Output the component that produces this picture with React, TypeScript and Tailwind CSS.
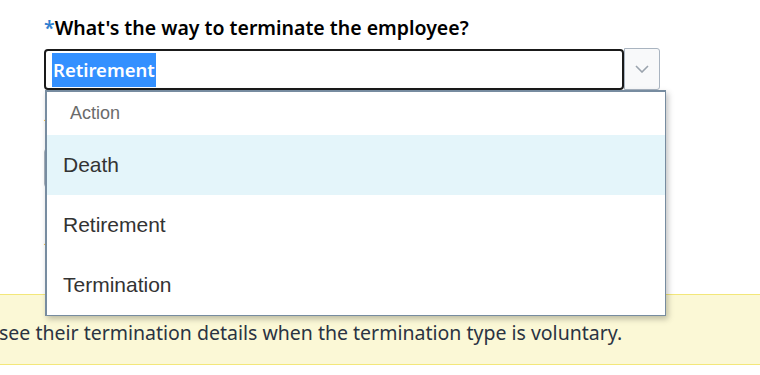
import React from "react";

export default function App() {
  return (
    <div className="relative w-[760px] h-[375px] overflow-hidden bg-white" style={{ fontFamily: "'Noto Sans', 'Open Sans', sans-serif" }}>
      <div className="pt-[13px] pl-[44px]">
        <div className="text-[19.5px] leading-[29px] font-semibold text-black">
          <span className="text-[#2f7fd0]">*</span>What's the way to terminate the employee?
        </div>
        <div className="mt-[7px] flex items-start">
          <div className="w-[580px] h-[41px] border-2 border-[#1a1a1a] rounded-[4px] flex items-center pl-[6px]">
            <span className="bg-[#3390ff] text-white font-semibold text-[18.5px] leading-[34px] px-[1px]">Retirement</span>
          </div>
          <div className="w-[36px] h-[42px] -mt-[1px] bg-[#f8f9fa] border border-[#a9b4c0] rounded-tr-[3px] rounded-br-[3px] flex items-center justify-center">
            <svg width="14" height="8" viewBox="0 0 14 8" fill="none">
              <path d="M1 1l6 6 6-6" stroke="#9aa3ad" strokeWidth="1.6" />
            </svg>
          </div>
        </div>
        <div className="mt-[28px] text-[#e07b2b] text-[12px] leading-[12px]">*</div>
        <div className="mt-[18px] w-[200px] h-[40px] border border-[#aab4be] rounded-[4px]"></div>
        <div className="mt-[54px] text-[#e07b2b] text-[12px] leading-[12px]">*</div>
      </div>
      <div className="absolute left-0 top-[294px] w-[760px] h-[71px] bg-[#fbf8d6] border-y border-[#f3e77a] flex items-start pt-[24px]">
        <span className="text-[19.5px] leading-[28px] text-[#2a3342] -ml-[1px]">see their termination details when the termination type is voluntary.</span>
      </div>
      <div className="absolute left-[45px] top-[90px] w-[621px] h-[226px] bg-white border-2 border-[#778ca0] border-r border-b shadow-[2px_3px_6px_rgba(0,0,0,0.25)]" style={{ fontFamily: "'Liberation Sans', Arial, sans-serif" }}>
        <div className="h-[43px] flex items-center pl-[23px] text-[18px] text-[#6b6b6b]">Action</div>
        <div className="h-[60px] flex items-center pl-[16px] text-[21px] text-[#333] bg-[#e4f5fa]">Death</div>
        <div className="h-[60px] flex items-center pl-[16px] text-[21px] text-[#333]">Retirement</div>
        <div className="h-[60px] flex items-center pl-[16px] text-[21px] text-[#333]">Termination</div>
      </div>
    </div>
  );
}
